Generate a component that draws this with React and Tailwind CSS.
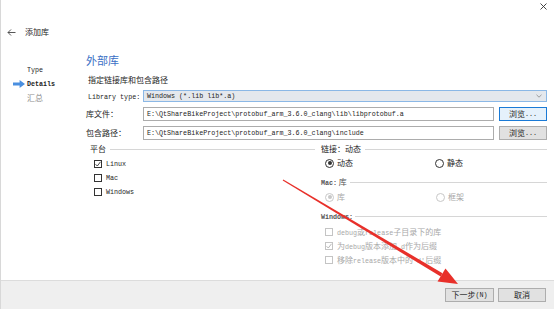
import React from 'react';

const M = ({ children, className = '' }) => (
  <span className={`font-['Liberation_Mono',monospace] text-[6.7px] ${className}`}>{children}</span>
);

const CheckBox = ({ checked, disabled }) => (
  <span
    className={`w-[8px] h-[8px] border flex items-center justify-center bg-white shrink-0 ${
      disabled ? 'border-[#c4c4c4]' : 'border-[#333333]'
    }`}
  >
    {checked && (
      <svg width="6" height="6" viewBox="0 0 6 6">
        <path d="M0.5 3.2 L2.3 5 L5.5 0.8" fill="none" stroke={disabled ? '#b0b0b0' : '#333333'} strokeWidth="0.9" />
      </svg>
    )}
  </span>
);

const Radio = ({ checked, disabled }) => (
  <span
    className={`w-[9px] h-[9px] rounded-full border flex items-center justify-center bg-white shrink-0 ${
      disabled ? 'border-[#c8c8c8]' : 'border-[#333333]'
    }`}
  >
    {checked && <span className={`w-[4px] h-[4px] rounded-full ${disabled ? 'bg-[#c8c8c8]' : 'bg-[#333333]'}`} />}
  </span>
);

const GroupTitle = ({ children, lineGap = 'ml-[4px]' }) => (
  <div className="flex items-center h-[10px]">
    <span className="leading-[10px] whitespace-nowrap">{children}</span>
    <span className={`flex-1 border-t border-[#d6d6d6] ${lineGap}`} />
  </div>
);

export default function App() {
  return (
    <div className="relative w-[554px] h-[309px] bg-white flex flex-col overflow-hidden border-l border-[#d8d8d8] text-[#1e1e1e] text-[8px] font-['Noto_Sans_CJK_SC',sans-serif]">
      {/* title bar */}
      <div className="h-[14px] flex justify-end items-start pr-[7px] pt-[3px]">
        <svg width="7" height="7" viewBox="0 0 7 7">
          <path d="M0.5 0.5 L6.5 6.5 M6.5 0.5 L0.5 6.5" stroke="#333" strokeWidth="0.9" />
        </svg>
      </div>

      {/* header */}
      <div className="h-[16px] mt-[10px] pl-[6px] flex items-center gap-[9px]">
        <svg width="9" height="7" viewBox="0 0 9 7">
          <path d="M8.5 3.5 H1 M4 0.5 L1 3.5 L4 6.5" fill="none" stroke="#444" strokeWidth="0.9" />
        </svg>
        <span className="leading-[16px]">添加库</span>
      </div>

      {/* main */}
      <div className="flex-1 flex">
        <nav className="w-[85px] pt-[23px] pl-[12px] flex flex-col">
          <div className="flex items-center h-[14px]">
            <span className="w-[14px]" />
            <M>Type</M>
          </div>
          <div className="flex items-center h-[14px]">
            <span className="w-[14px] flex items-center">
              <svg width="12" height="8" viewBox="0 0 12 8">
                <path d="M0 2.4 H6.6 V0 L12 4 L6.6 8 V5.6 H0 Z" fill="#4a8fe0" />
              </svg>
            </span>
            <M className="font-bold">Details</M>
          </div>
          <div className="flex items-center h-[14px]">
            <span className="w-[14px]" />
            <span className="text-[#8c8c8c]">汇总</span>
          </div>
        </nav>

        <section className="flex-1 pt-[13px] pr-[7px] flex flex-col">
          <div className="h-[14px] leading-[14px] text-[11px] text-[#3a70c5]">外部库</div>
          <div className="mt-[7px] pl-[2px] h-[12px] leading-[12px]">指定链接库和包含路径</div>

          <div className="mt-[4px] flex items-center h-[12px]">
            <div className="w-[57px] pl-[2px]">
              <M>Library type:</M>
            </div>
            <div className="flex-1 h-[12px] bg-[#e4e8ed] border border-[#8bb8e6] flex items-center justify-between pl-[3px] pr-[4px]">
              <M>Windows (*.lib lib*.a)</M>
              <svg width="6" height="4" viewBox="0 0 6 4">
                <path d="M0.5 0.8 L3 3.2 L5.5 0.8" fill="none" stroke="#888" strokeWidth="0.8" />
              </svg>
            </div>
          </div>

          <div className="mt-[5px] flex items-center h-[14px]">
            <div className="w-[57px]">库文件：</div>
            <div className="flex-1 h-[14px] border border-[#acacac] flex items-center pl-[3px]">
              <M className="text-[6.5px]">{'E:\\QtShareBikeProject\\protobuf_arm_3.6.0_clang\\lib\\libprotobuf.a'}</M>
            </div>
            <button className="ml-[5px] w-[48px] h-[14px] bg-[#e5f1fb] border border-[#1a7ad6] text-[8px] flex items-center justify-center">
              浏览<M>...</M>
            </button>
          </div>

          <div className="mt-[5px] flex items-center h-[14px]">
            <div className="w-[57px]">包含路径：</div>
            <div className="flex-1 h-[14px] border border-[#acacac] flex items-center pl-[3px]">
              <M className="text-[6.5px]">{'E:\\QtShareBikeProject\\protobuf_arm_3.6.0_clang\\include'}</M>
            </div>
            <button className="ml-[5px] w-[48px] h-[14px] bg-[#e1e1e1] border border-[#adadad] text-[8px] flex items-center justify-center">
              浏览<M>...</M>
            </button>
          </div>

          <div className="mt-[4px] flex">
            {/* platform */}
            <div className="w-[235px] pr-[6px] flex flex-col">
              <div className="pl-[4px]">
                <GroupTitle>平台</GroupTitle>
              </div>
              <div className="mt-[3px] pl-[8px] flex flex-col">
                <label className="h-[14px] flex items-center gap-[4px]">
                  <CheckBox checked />
                  <M>Linux</M>
                </label>
                <label className="h-[14px] flex items-center gap-[4px]">
                  <CheckBox />
                  <M>Mac</M>
                </label>
                <label className="h-[14px] flex items-center gap-[4px]">
                  <CheckBox />
                  <M>Windows</M>
                </label>
              </div>
            </div>

            {/* linkage */}
            <div className="flex-1 flex flex-col">
              <GroupTitle>链接：动态</GroupTitle>
              <div className="mt-[2px] h-[14px] pl-[4px] flex items-center">
                <label className="w-[110px] flex items-center gap-[3px]">
                  <Radio checked />
                  <span>动态</span>
                </label>
                <label className="flex items-center gap-[3px]">
                  <Radio />
                  <span>静态</span>
                </label>
              </div>

              <div className="mt-[7px] text-[#555]">
                <GroupTitle lineGap="ml-[3px]">
                  <M className="font-bold">Mac:</M> 库
                </GroupTitle>
              </div>
              <div className="mt-[3px] h-[14px] pl-[4px] flex items-center text-[#a8a8a8]">
                <label className="w-[111px] flex items-center gap-[3px]">
                  <Radio checked disabled />
                  <span>库</span>
                </label>
                <label className="flex items-center gap-[3px]">
                  <Radio disabled />
                  <span>框架</span>
                </label>
              </div>

              <div className="mt-[7px] text-[#555]">
                <GroupTitle lineGap="ml-[2px]">
                  <M className="font-bold">Windows:</M>
                </GroupTitle>
              </div>
              <div className="mt-[4px] pl-[4px] flex flex-col text-[#a8a8a8]">
                <label className="h-[14px] flex items-center gap-[4px]">
                  <CheckBox disabled />
                  <span>
                    <M>debug</M>或<M>release</M>子目录下的库
                  </span>
                </label>
                <label className="h-[14px] flex items-center gap-[4px]">
                  <CheckBox checked disabled />
                  <span>
                    为<M>debug</M>版本添加<M>_d</M>作为后缀
                  </span>
                </label>
                <label className="h-[14px] flex items-center gap-[4px]">
                  <CheckBox disabled />
                  <span>
                    移除<M>release</M>版本中的<M>'d'</M>后缀
                  </span>
                </label>
              </div>
            </div>
          </div>
        </section>
      </div>

      {/* footer */}
      <footer className="h-[29px] bg-[#efefef] border-t border-[#dcdcdc] flex items-center justify-end gap-[4px] pr-[8px]">
        <button className="w-[49px] h-[14px] bg-[#e1e1e1] border border-[#adadad] flex items-center justify-center text-[8px]">
          下一步<M>(N)</M>
        </button>
        <button className="w-[48px] h-[14px] bg-[#e1e1e1] border border-[#adadad] flex items-center justify-center text-[8px]">
          取消
        </button>
      </footer>

      {/* red annotation arrow */}
      <svg className="absolute left-0 top-0 pointer-events-none" width="554" height="309" viewBox="0 0 554 309">
        <polygon points="282.3,179.6 281.7,180.4 439.7,276.6 441.5,273.2" fill="#e8302a" />
        <polygon points="457,284 444.5,268.5 436.5,281.5" fill="#e8302a" />
      </svg>
    </div>
  );
}
